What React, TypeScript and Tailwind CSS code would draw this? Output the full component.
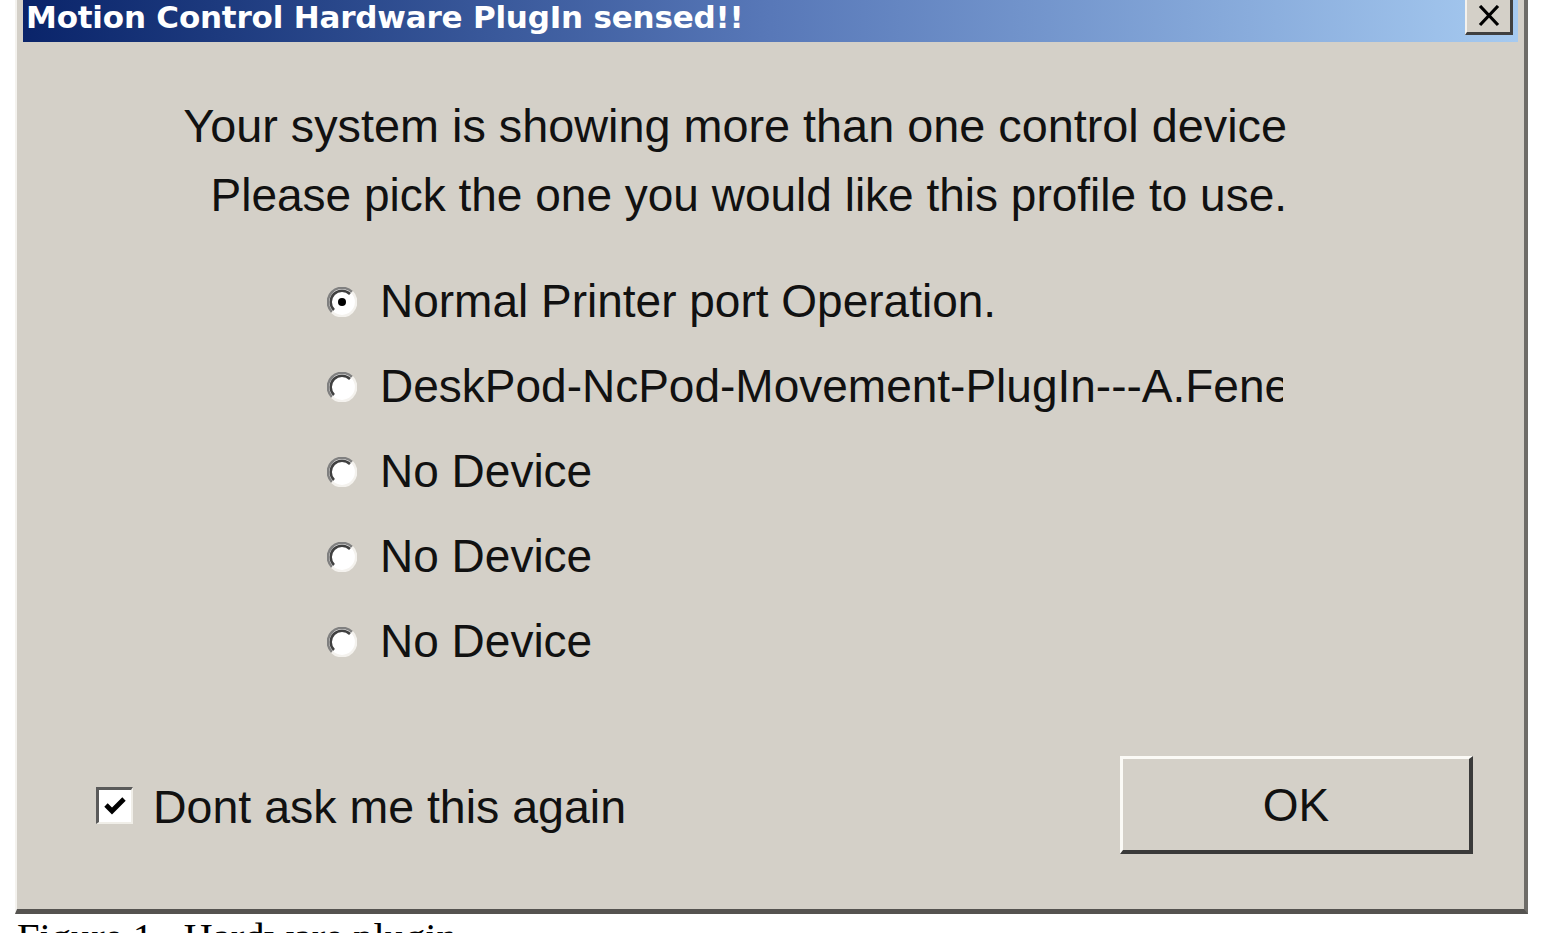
import React from "react";

const options = [
  "Normal Printer port Operation.",
  "DeskPod-NcPod-Movement-PlugIn---A.Fenerty",
  "No Device",
  "No Device",
  "No Device",
];

function Radio({ checked }: { checked: boolean }) {
  return (
    <svg width="30" height="30" viewBox="0 0 12 12" className="shrink-0">
      <circle cx="6" cy="6" r="5.5" fill="#ffffff" />
      <path d="M10 2 A5.5 5.5 0 0 0 2 10" fill="none" stroke="#808080" strokeWidth="1" />
      <path d="M9.2 2.8 A4.5 4.5 0 0 0 2.8 9.2" fill="none" stroke="#404040" strokeWidth="1" />
      <path d="M2 10 A5.5 5.5 0 0 0 10 2" fill="none" stroke="#f4f2ee" strokeWidth="1" />
      {checked && <circle cx="6" cy="6" r="1.6" fill="#000000" />}
    </svg>
  );
}

function Checkbox() {
  return (
    <div className="w-[37px] h-[37px] shrink-0 border-t-[3px] border-l-[3px] border-t-[#5a5a5a] border-l-[#5a5a5a] border-b-[2px] border-r-[2px] border-b-[#f0eee8] border-r-[#f0eee8] bg-white flex items-center justify-center">
      <svg width="26" height="26" viewBox="0 0 13 13">
        <path d="M2 6 L5 9 L11 3" fill="none" stroke="#000" strokeWidth="2.4" />
      </svg>
    </div>
  );
}

export default function App() {
  return (
    <div className="w-[1561px] h-[933px] bg-white overflow-hidden" style={{ fontFamily: '"Liberation Sans", Arial, sans-serif' }}>
      {/* dialog window */}
      <div className="ml-[15px] w-[1513px] h-[914px] bg-[#d4d0c8] border-l-[2px] border-l-[#f4f2ee] border-r-[4px] border-r-[#6e6c68] border-b-[5px] border-b-[#555350] flex flex-col">
        {/* title bar */}
        <div className="ml-[6px] mr-[6px] h-[42px] flex items-start justify-between bg-gradient-to-r from-[#0a246a] via-[#5878b8] to-[#a6caf0]">
          <div
            className="text-white font-bold text-[31px] leading-none pl-[3px] mt-[2px] tracking-[-0.2px]"
            style={{ fontFamily: '"DejaVu Sans", Verdana, sans-serif' }}
          >
            Motion Control Hardware PlugIn sensed!!
          </div>
          <div className="mr-[5px] w-[48px] h-[35px] bg-[#d4d0c8] border-l-[2px] border-l-[#f4f2ee] border-r-[3px] border-r-[#404040] border-b-[3px] border-b-[#404040] flex items-center justify-center">
            <svg width="26" height="22" viewBox="0 0 26 22">
              <path d="M4 1 L22 20 M22 1 L4 20" stroke="#000" strokeWidth="3.2" />
            </svg>
          </div>
        </div>

        {/* body */}
        <div className="flex-1 flex flex-col text-[#111] text-[46px]">
          <div className="mt-[50px] w-[1270px] text-right leading-[69px]">
            <div className="text-[46.8px]">Your system is showing more than one control device</div>
            <div>Please pick the one you would like this profile to use.</div>
          </div>

          <div className="mt-[29px] flex flex-col pl-[310px]">
            {options.map((o, i) => (
              <div key={i} className="h-[85px] flex items-center">
                <Radio checked={i === 0} />
                <div className="ml-[23px] w-[903px] overflow-hidden whitespace-nowrap leading-[85px]">{o}</div>
              </div>
            ))}
          </div>

          <div className="mt-[72px] flex items-center justify-between pl-[79px] pr-[51px]">
            <div className="flex items-center gap-[20px]">
              <Checkbox />
              <span className="leading-none text-[46.5px] mt-[4px]">Dont ask me this again</span>
            </div>
            <div className="w-[353px] h-[98px] bg-[#d4d0c8] border-t-[3px] border-l-[3px] border-t-[#fbfaf6] border-l-[#fbfaf6] border-b-[4px] border-r-[4px] border-b-[#3a3a3a] border-r-[#3a3a3a] flex items-center justify-center">
              <span className="leading-none">OK</span>
            </div>
          </div>
        </div>
      </div>

      {/* caption */}
      <div className="mt-[4px] pl-[17px] text-black text-[40.5px] leading-none" style={{ fontFamily: '"Liberation Serif", "Times New Roman", serif' }}>
        Figure 1.&nbsp; Hardware plugin
      </div>
    </div>
  );
}
